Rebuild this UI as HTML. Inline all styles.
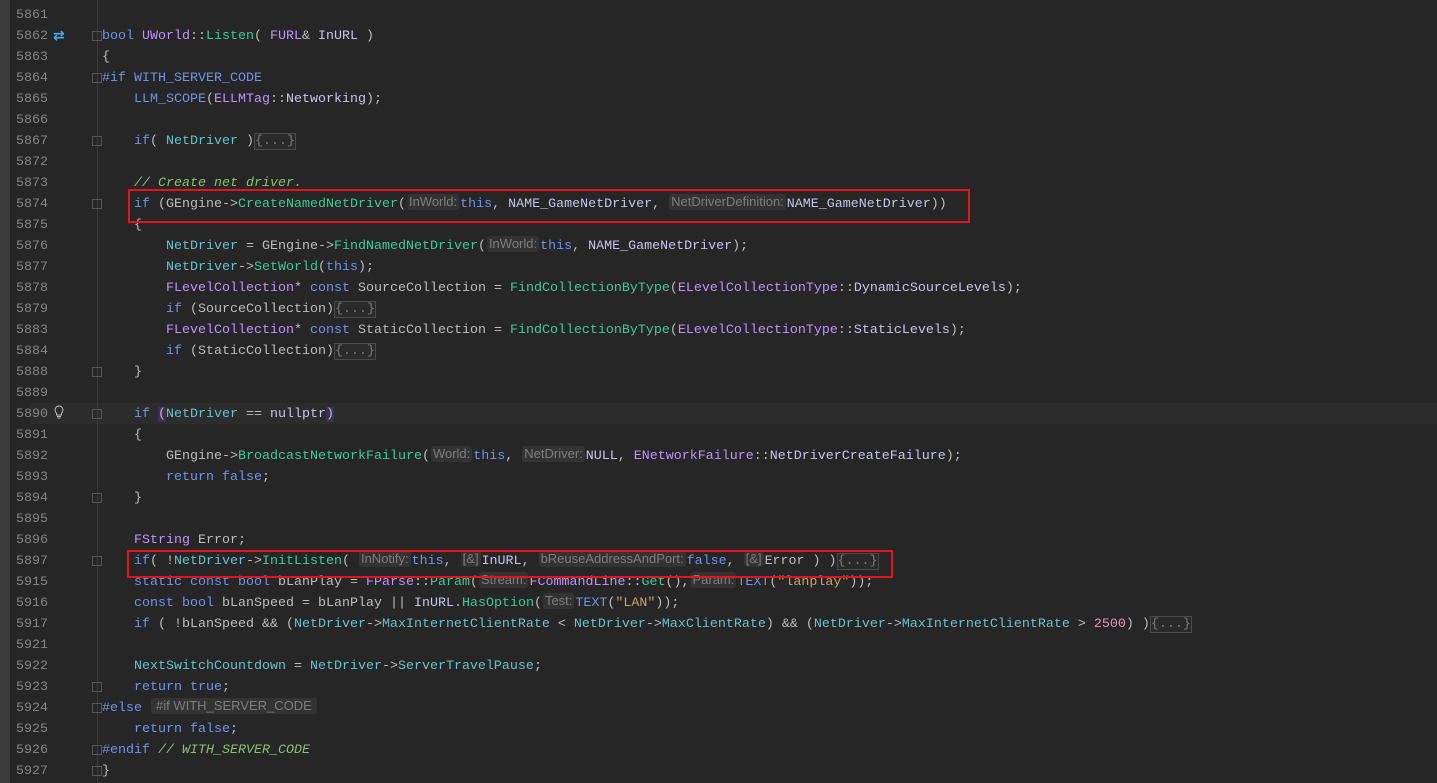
<!DOCTYPE html>
<html><head><meta charset="utf-8"><style>
html,body{margin:0;padding:0;background:#262626;width:1437px;height:783px;overflow:hidden}
.strip{position:absolute;left:0;top:0;width:10px;height:783px;background:#3b3b3b}
.vl{position:absolute;left:97px;top:0;width:1px;height:783px;background:#3a3a3a}
.ln{position:absolute;left:16px;width:40px;font:13.33px "Liberation Mono",monospace;color:#858585;line-height:21px}
.c{position:absolute;left:102px;font:13.33px "Liberation Mono",monospace;color:#bdbdbd;white-space:pre;line-height:21px}
.k{color:#6c95eb}.t{color:#c191ff}.f{color:#39cc9b}.v{color:#66c3cc}.m{color:#6c95eb}.e{color:#c5c5ef}.cm{color:#85c46c;font-style:italic}.s{color:#c9a26d}.n{color:#ed94c0}
.h{display:inline-block;background:#333;color:#7d7d7d;font:13px "Liberation Sans",sans-serif;line-height:16px;padding:0 2px;border-radius:3px;margin:0 1px;vertical-align:1px}
.fd{border:1px solid #4a4a4a;color:#7a7a7a;background:#2a2a2a}
.box{position:absolute;border:2px solid #e4141c}
.cur{position:absolute;left:30px;width:1407px;height:21px;background:#2c2c2c}
.fm{position:absolute;left:92px;width:8px;height:8px;border:1px solid #555}
.ppar{background:#3d2f55}
</style></head><body>
<div class="strip"></div>
<div class="cur" style="top:403px"></div>
<div class="vl"></div>
<div class="ln" style="top:5px">5861</div><div class="ln" style="top:26px">5862</div><div class="ln" style="top:47px">5863</div><div class="ln" style="top:68px">5864</div><div class="ln" style="top:89px">5865</div><div class="ln" style="top:110px">5866</div><div class="ln" style="top:131px">5867</div><div class="ln" style="top:152px">5872</div><div class="ln" style="top:173px">5873</div><div class="ln" style="top:194px">5874</div><div class="ln" style="top:215px">5875</div><div class="ln" style="top:236px">5876</div><div class="ln" style="top:257px">5877</div><div class="ln" style="top:278px">5878</div><div class="ln" style="top:299px">5879</div><div class="ln" style="top:320px">5883</div><div class="ln" style="top:341px">5884</div><div class="ln" style="top:362px">5888</div><div class="ln" style="top:383px">5889</div><div class="ln" style="top:404px">5890</div><div class="ln" style="top:425px">5891</div><div class="ln" style="top:446px">5892</div><div class="ln" style="top:467px">5893</div><div class="ln" style="top:488px">5894</div><div class="ln" style="top:509px">5895</div><div class="ln" style="top:530px">5896</div><div class="ln" style="top:551px">5897</div><div class="ln" style="top:572px">5915</div><div class="ln" style="top:593px">5916</div><div class="ln" style="top:614px">5917</div><div class="ln" style="top:635px">5921</div><div class="ln" style="top:656px">5922</div><div class="ln" style="top:677px">5923</div><div class="ln" style="top:698px">5924</div><div class="ln" style="top:719px">5925</div><div class="ln" style="top:740px">5926</div><div class="ln" style="top:761px">5927</div>
<div style="position:absolute;left:53px;top:28px;color:#4aa8f0;font:bold 14px 'DejaVu Sans',sans-serif">⇄</div>
<svg style="position:absolute;left:53px;top:405px" width="12" height="14" viewBox="0 0 12 14"><path d="M6 1a4 4 0 0 0-2.5 7v2h5V8A4 4 0 0 0 6 1z M4 11.5h4 M4.5 13h3" fill="none" stroke="#bbb" stroke-width="1"/></svg>
<div class="fm" style="top:31px"></div><div class="fm" style="top:73px"></div><div class="fm" style="top:136px"></div><div class="fm" style="top:199px"></div><div class="fm" style="top:367px"></div><div class="fm" style="top:409px"></div><div class="fm" style="top:493px"></div><div class="fm" style="top:556px"></div><div class="fm" style="top:682px"></div><div class="fm" style="top:703px"></div><div class="fm" style="top:745px"></div><div class="fm" style="top:766px"></div>
<div class="c" style="top:26px"><span class="k">bool</span> <span class="t">UWorld</span>::<span class="f">Listen</span>( <span class="t">FURL</span>&amp; <span class="e">InURL</span> )</div>
<div class="c" style="top:47px">{</div>
<div class="c" style="top:68px"><span class="k">#if</span> <span class="m">WITH_SERVER_CODE</span></div>
<div class="c" style="top:89px">    <span class="m">LLM_SCOPE</span>(<span class="t">ELLMTag</span>::<span class="e">Networking</span>);</div>
<div class="c" style="top:131px">    <span class="k">if</span>( <span class="v">NetDriver</span> )<span class="fd">{...}</span></div>
<div class="c" style="top:173px">    <span class="cm">// Create net driver.</span></div>
<div class="c" style="top:194px">    <span class="k">if</span> (GEngine-&gt;<span class="f">CreateNamedNetDriver</span>(<span class="h">InWorld:</span><span class="k">this</span>, <span class="e">NAME_GameNetDriver</span>, <span class="h">NetDriverDefinition:</span><span class="e">NAME_GameNetDriver</span>))</div>
<div class="c" style="top:215px">    {</div>
<div class="c" style="top:236px">        <span class="v">NetDriver</span> = GEngine-&gt;<span class="f">FindNamedNetDriver</span>(<span class="h">InWorld:</span><span class="k">this</span>, <span class="e">NAME_GameNetDriver</span>);</div>
<div class="c" style="top:257px">        <span class="v">NetDriver</span>-&gt;<span class="f">SetWorld</span>(<span class="k">this</span>);</div>
<div class="c" style="top:278px">        <span class="t">FLevelCollection</span>* <span class="k">const</span> SourceCollection = <span class="f">FindCollectionByType</span>(<span class="t">ELevelCollectionType</span>::<span class="e">DynamicSourceLevels</span>);</div>
<div class="c" style="top:299px">        <span class="k">if</span> (SourceCollection)<span class="fd">{...}</span></div>
<div class="c" style="top:320px">        <span class="t">FLevelCollection</span>* <span class="k">const</span> StaticCollection = <span class="f">FindCollectionByType</span>(<span class="t">ELevelCollectionType</span>::<span class="e">StaticLevels</span>);</div>
<div class="c" style="top:341px">        <span class="k">if</span> (StaticCollection)<span class="fd">{...}</span></div>
<div class="c" style="top:362px">    }</div>
<div class="c" style="top:404px">    <span class="k">if</span> <span class="ppar">(</span><span class="v">NetDriver</span> == <span class="e">nullptr</span><span class="ppar">)</span></div>
<div class="c" style="top:425px">    {</div>
<div class="c" style="top:446px">        GEngine-&gt;<span class="f">BroadcastNetworkFailure</span>(<span class="h">World:</span><span class="k">this</span>, <span class="h">NetDriver:</span><span class="e">NULL</span>, <span class="t">ENetworkFailure</span>::<span class="e">NetDriverCreateFailure</span>);</div>
<div class="c" style="top:467px">        <span class="k">return false</span>;</div>
<div class="c" style="top:488px">    }</div>
<div class="c" style="top:530px">    <span class="t">FString</span> Error;</div>
<div class="c" style="top:551px">    <span class="k">if</span>( !<span class="v">NetDriver</span>-&gt;<span class="f">InitListen</span>( <span class="h">InNotify:</span><span class="k">this</span>, <span class="h">[&amp;]</span><span class="e">InURL</span>, <span class="h">bReuseAddressAndPort:</span><span class="k">false</span>, <span class="h">[&amp;]</span>Error ) )<span class="fd">{...}</span></div>
<div class="c" style="top:572px">    <span class="k">static const bool</span> bLanPlay = <span class="t">FParse</span>::<span class="f">Param</span>(<span class="h">Stream:</span><span class="t">FCommandLine</span>::<span class="f">Get</span>(),<span class="h">Param:</span><span class="m">TEXT</span>(<span class="s">"lanplay"</span>));</div>
<div class="c" style="top:593px">    <span class="k">const bool</span> bLanSpeed = bLanPlay || <span class="e">InURL</span>.<span class="f">HasOption</span>(<span class="h">Test:</span><span class="m">TEXT</span>(<span class="s">"LAN"</span>));</div>
<div class="c" style="top:614px">    <span class="k">if</span> ( !bLanSpeed &amp;&amp; (<span class="v">NetDriver</span>-&gt;<span class="v">MaxInternetClientRate</span> &lt; <span class="v">NetDriver</span>-&gt;<span class="v">MaxClientRate</span>) &amp;&amp; (<span class="v">NetDriver</span>-&gt;<span class="v">MaxInternetClientRate</span> &gt; <span class="n">2500</span>) )<span class="fd">{...}</span></div>
<div class="c" style="top:656px">    <span class="v">NextSwitchCountdown</span> = <span class="v">NetDriver</span>-&gt;<span class="v">ServerTravelPause</span>;</div>
<div class="c" style="top:677px">    <span class="k">return true</span>;</div>
<div class="c" style="top:698px"><span class="k">#else</span> <span class="h" style="padding:0 5px">#if WITH_SERVER_CODE</span></div>
<div class="c" style="top:719px">    <span class="k">return false</span>;</div>
<div class="c" style="top:740px"><span class="k">#endif</span> <span class="cm">// WITH_SERVER_CODE</span></div>
<div class="c" style="top:761px">}</div>
<div class="box" style="left:128px;top:189px;width:838px;height:30px"></div>
<div class="box" style="left:127px;top:550px;width:762px;height:24px"></div>
</body></html>
